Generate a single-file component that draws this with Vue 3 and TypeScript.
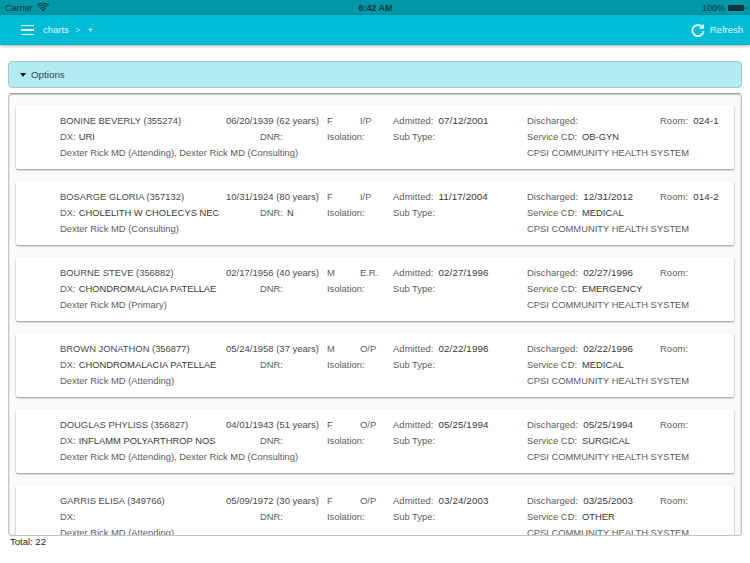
<script setup lang="ts">
interface Chart {
  name: string; dob: string; sex: string; type: string; admitted: string; discharged: string;
  room: string; dx: string; dnr: string; service: string; doctors: string;
}
const charts: Chart[] = [
  { name: 'BONINE BEVERLY (355274)', dob: '06/20/1939 (62 years)', sex: 'F', type: 'I/P', admitted: '07/12/2001', discharged: '', room: '024-1', dx: 'URI', dnr: '', service: 'OB-GYN', doctors: 'Dexter Rick MD (Attending), Dexter Rick MD (Consulting)' },
  { name: 'BOSARGE GLORIA (357132)', dob: '10/31/1924 (80 years)', sex: 'F', type: 'I/P', admitted: '11/17/2004', discharged: '12/31/2012', room: '014-2', dx: 'CHOLELITH W CHOLECYS NEC', dnr: 'N', service: 'MEDICAL', doctors: 'Dexter Rick MD (Consulting)' },
  { name: 'BOURNE STEVE (356882)', dob: '02/17/1956 (40 years)', sex: 'M', type: 'E.R.', admitted: '02/27/1996', discharged: '02/27/1996', room: '', dx: 'CHONDROMALACIA PATELLAE', dnr: '', service: 'EMERGENCY', doctors: 'Dexter Rick MD (Primary)' },
  { name: 'BROWN JONATHON (356877)', dob: '05/24/1958 (37 years)', sex: 'M', type: 'O/P', admitted: '02/22/1996', discharged: '02/22/1996', room: '', dx: 'CHONDROMALACIA PATELLAE', dnr: '', service: 'MEDICAL', doctors: 'Dexter Rick MD (Attending)' },
  { name: 'DOUGLAS PHYLISS (356827)', dob: '04/01/1943 (51 years)', sex: 'F', type: 'O/P', admitted: '05/25/1994', discharged: '05/25/1994', room: '', dx: 'INFLAMM POLYARTHROP NOS', dnr: '', service: 'SURGICAL', doctors: 'Dexter Rick MD (Attending), Dexter Rick MD (Consulting)' },
  { name: 'GARRIS ELISA (349766)', dob: '05/09/1972 (30 years)', sex: 'F', type: 'O/P', admitted: '03/24/2003', discharged: '03/25/2003', room: '', dx: '', dnr: '', service: 'OTHER', doctors: 'Dexter Rick MD (Attending)' },
];
</script>

<template>
  <div class="page">
    <div class="status">
      <div class="status-left">
        <span>Carrier</span>
        <svg class="wifi" width="12" height="9" viewBox="0 0 12 9">
          <path d="M6 8.6 4.4 6.8a2.3 2.3 0 0 1 3.2 0Z" fill="#10323a" />
          <path d="M3.4 5.7a3.8 3.8 0 0 1 5.2 0" fill="none" stroke="#10323a" stroke-width="1.1" />
          <path d="M1.7 3.8a6.2 6.2 0 0 1 8.6 0" fill="none" stroke="#10323a" stroke-width="1.1" />
          <path d="M.3 2.2a8.3 8.3 0 0 1 11.4 0" fill="none" stroke="#10323a" stroke-width="1.1" />
        </svg>
      </div>
      <span class="clock">6:42 AM</span>
      <div class="status-right">
        <span>100%</span>
        <span class="battery"><i></i></span>
      </div>
    </div>
    <header class="nav">
      <div class="nav-left">
        <span class="burger"><i></i><i></i><i></i></span>
        <span class="crumb">charts</span>
        <span class="crumb sep">&gt;</span>
        <span class="crumb">+</span>
      </div>
      <div class="refresh">
        <svg width="14" height="14" viewBox="0 0 14 14">
          <path d="M11.6 4.4A5.6 5.6 0 1 0 12.6 8" fill="none" stroke="#e6f9fc" stroke-width="1.8" />
          <path d="M12.9 .7v5h-5Z" fill="#e6f9fc" />
        </svg>
        <span class="crumb">Refresh</span>
      </div>
    </header>
    <main class="content">
      <div class="options"><span class="caret"></span>Options</div>
      <section class="list">
        <article v-for="c in charts" :key="c.name" class="card">
          <span class="name">{{ c.name }}</span>
          <span class="dob">{{ c.dob }}</span>
          <span class="col-sex">{{ c.sex }}</span>
          <span class="col-type">{{ c.type }}</span>
          <span class="col-admit wide">Admitted:<b>{{ c.admitted }}</b></span>
          <span class="col-disch wide first">Discharged:<b>{{ c.discharged }}</b></span>
          <span class="col-room wide">Room:<b>{{ c.room }}</b></span>

          <span class="col-dx">DX:<b>{{ c.dx }}</b></span>
          <span class="col-dnr">DNR:<b>{{ c.dnr }}</b></span>
          <span class="col-sex">Isolation:</span>
          <span class="col-admit">Sub Type:</span>
          <span class="col-disch service">Service CD:<b>{{ c.service }}</b></span>

          <span class="col-doc">{{ c.doctors }}</span>
          <span class="col-disch">CPSI COMMUNITY HEALTH SYSTEM</span>
        </article>
      </section>
      <div class="total">Total: 22</div>
    </main>
  </div>
</template>

<style scoped>
.page {
  width: 750px;
  height: 563px;
  overflow: hidden;
  background: #fff;
  font-family: "Liberation Sans", Arial, sans-serif;
  color: #5c5c5c;
}
.status {
  height: 15px;
  background: #0097a7;
  color: #10323a;
  font-size: 9px;
  padding: 0 4px 0 5px;
  display: grid;
  grid-template-columns: 1fr auto 1fr;
  align-items: center;
}
.status-left { display: flex; align-items: center; gap: 4px; }
.clock { font-weight: 700; }
.status-right { display: flex; justify-content: flex-end; align-items: center; gap: 3px; }
.battery {
  width: 16px;
  height: 6px;
  background: #10323a;
  border-radius: 1px;
  position: relative;
  margin-right: 2px;
}
.battery i {
  position: absolute;
  right: -2px;
  top: 2px;
  width: 1.5px;
  height: 2.5px;
  background: #10323a;
}
.nav {
  height: 30px;
  background: #00bcd4;
  box-shadow: 0 1px 3px rgba(0, 0, 0, .35);
  display: flex;
  justify-content: space-between;
  align-items: center;
  padding: 0 7px 0 21px;
  color: #e0f7fa;
  font-size: 9.5px;
  position: relative;
}
.nav-left { display: flex; align-items: center; }
.burger { display: flex; flex-direction: column; gap: 3px; width: 13px; margin-right: 9px; }
.burger i { height: 1.6px; background: #e6f9fc; display: block; }
.crumb { margin-bottom: 1px; }
.sep { margin-left: 6px; margin-right: 7px; color: #a3e6ef; }
.refresh { display: flex; align-items: center; gap: 5px; }
.content { padding: 16px 8px 0; }
.options {
  height: 27px;
  box-sizing: border-box;
  background: #b2ebf2;
  border: 1px solid #a9c4c9;
  border-radius: 4px;
  display: flex;
  align-items: center;
  padding-left: 11px;
  font-size: 9.8px;
  color: #37474f;
}
.caret {
  width: 0;
  height: 0;
  border-left: 3.5px solid transparent;
  border-right: 3.5px solid transparent;
  border-top: 4px solid #111;
  margin-right: 5px;
}
.list {
  height: 443px;
  margin-top: 5px;
  box-sizing: border-box;
  border: 1px solid #c4c4c4;
  border-top: 1px solid #999;
  border-radius: 4px;
  background: #fafafa;
  box-shadow: inset 0 1px 2px rgba(0, 0, 0, .2);
  padding: 11px 7px 0;
  overflow: hidden;
  display: flex;
  flex-direction: column;
  gap: 12px;
}
.card {
  flex: none;
  height: 64px;
  box-sizing: border-box;
  background: #fff;
  border-radius: 2px;
  box-shadow: 0 1px 2px rgba(0, 0, 0, .4);
  padding: 7.6px 0 0 44px;
  display: grid;
  grid-template-columns: 166px 34px 67px 33px 33px 134px 133px 1fr;
  grid-auto-rows: 16px;
  align-items: center;
  font-size: 9.4px;
  white-space: nowrap;
}
.card b { font-weight: 400; color: #383838; margin-left: 4px; }
.card .wide { letter-spacing: .1px; }
.card .wide b { font-size: 9.8px; margin-left: 5px; }
.card .col-dx b { margin-left: 3px; }
.card .service b { margin-left: 5px; }
.name { grid-column: 1; color: #4a4a4a; }
.dob { grid-column: 2 / 4; color: #4a4a4a; font-size: 9.5px; }
.col-sex { grid-column: 4; }
.col-type { grid-column: 5; }
.col-admit { grid-column: 6; }
.col-disch { grid-column: 7 / 9; }
.col-disch.first { grid-column: 7; }
.col-room { grid-column: 8; }
.col-dx { grid-column: 1 / 3; }
.col-dnr { grid-column: 3; }
.col-doc { grid-column: 1 / 7; }
.total { font-size: 9.5px; color: #222; margin-top: -1px; padding: 1px 2px 0; }
</style>
